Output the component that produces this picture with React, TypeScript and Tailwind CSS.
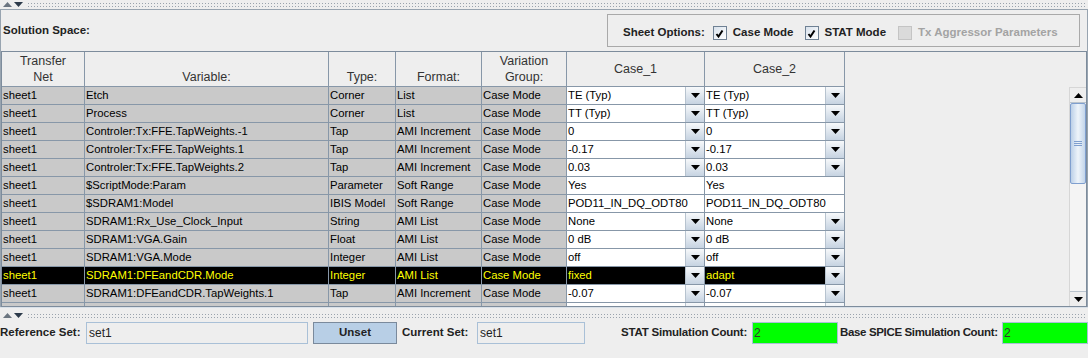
import React from "react";

type Row = {
  v: string;
  t: string;
  f: string;
  c1: string;
  c2: string;
  dd: boolean;
  sel?: boolean;
};

const rows: Row[] = [
  { v: "Etch", t: "Corner", f: "List", c1: "TE (Typ)", c2: "TE (Typ)", dd: true },
  { v: "Process", t: "Corner", f: "List", c1: "TT (Typ)", c2: "TT (Typ)", dd: true },
  { v: "Controler:Tx:FFE.TapWeights.-1", t: "Tap", f: "AMI Increment", c1: "0", c2: "0", dd: true },
  { v: "Controler:Tx:FFE.TapWeights.1", t: "Tap", f: "AMI Increment", c1: "-0.17", c2: "-0.17", dd: true },
  { v: "Controler:Tx:FFE.TapWeights.2", t: "Tap", f: "AMI Increment", c1: "0.03", c2: "0.03", dd: true },
  { v: "$ScriptMode:Param", t: "Parameter", f: "Soft Range", c1: "Yes", c2: "Yes", dd: false },
  { v: "$SDRAM1:Model", t: "IBIS Model", f: "Soft Range", c1: "POD11_IN_DQ_ODT80", c2: "POD11_IN_DQ_ODT80", dd: false },
  { v: "SDRAM1:Rx_Use_Clock_Input", t: "String", f: "AMI List", c1: "None", c2: "None", dd: true },
  { v: "SDRAM1:VGA.Gain", t: "Float", f: "AMI List", c1: "0 dB", c2: "0 dB", dd: true },
  { v: "SDRAM1:VGA.Mode", t: "Integer", f: "AMI List", c1: "off", c2: "off", dd: true },
  { v: "SDRAM1:DFEandCDR.Mode", t: "Integer", f: "AMI List", c1: "fixed", c2: "adapt", dd: true, sel: true },
  { v: "SDRAM1:DFEandCDR.TapWeights.1", t: "Tap", f: "AMI Increment", c1: "-0.07", c2: "-0.07", dd: true },
  { v: "", t: "", f: "", c1: "", c2: "", dd: true },
];

const DownArrow = () => (
  <svg width="9" height="5" viewBox="0 0 9 5">
    <path d="M0 0h9L4.5 5z" fill="#000" />
  </svg>
);

const UpArrow = () => (
  <svg width="9" height="5" viewBox="0 0 9 5">
    <path d="M0 5h9L4.5 0z" fill="#000" />
  </svg>
);

const DropBtn = () => (
  <div className="w-[19px] h-full shrink-0 flex items-center justify-center border-l border-[#b7c3cf] bg-gradient-to-b from-[#f7f9fb] to-[#c6d3e1]">
    <DownArrow />
  </div>
);

const Check = ({ checked, disabled }: { checked?: boolean; disabled?: boolean }) =>
  disabled ? (
    <div className="w-[14px] h-[14px] border border-[#c4c4c4] bg-[#dadada]" />
  ) : (
    <div className="w-[14px] h-[14px] border border-[#6f8194] bg-gradient-to-br from-[#d9e2ec] to-[#ffffff] flex items-center justify-center">
      {checked && (
        <svg width="9" height="9" viewBox="0 0 9 9">
          <path d="M1.5 5 L3.5 7.5 L7.5 1.5" stroke="#000" strokeWidth="2" fill="none" />
        </svg>
      )}
    </div>
  );

const Splitter = ({ className }: { className: string }) => (
  <div className={`flex items-center gap-[2px] px-[3px] ${className}`}>
    <svg width="9" height="5" viewBox="0 0 9 5">
      <path d="M0 5h9L4.5 0z" fill="#6b7580" />
    </svg>
    <svg width="9" height="5" viewBox="0 0 9 5">
      <path d="M0 0h9L4.5 5z" fill="#2c3a4a" />
    </svg>
    <div className="flex-1 h-[5px] ml-[2px] bg-[radial-gradient(circle,#9aa3ad_0.7px,transparent_0.9px)] bg-[length:3px_3px]" />
  </div>
);

function Cell({ w, text, sel }: { w: string; text: string; sel?: boolean }) {
  return (
    <div
      className={`${w} h-full shrink-0 border-r border-[#8797a8] pl-[1px] flex items-center whitespace-nowrap overflow-hidden ${
        sel ? "bg-black text-[#ffff00]" : "bg-[#c9c9c9] text-black"
      }`}
    >
      {text}
    </div>
  );
}

function CaseCell({ w, text, dd, sel }: { w: string; text: string; dd: boolean; sel?: boolean }) {
  return (
    <div
      className={`${w} h-full shrink-0 border-r border-[#8797a8] flex ${
        sel ? "bg-black text-[#ffff00]" : "bg-white text-black"
      }`}
    >
      <div className="flex-1 pl-[1px] flex items-center whitespace-nowrap overflow-hidden">{text}</div>
      {dd && <DropBtn />}
    </div>
  );
}

export default function App() {
  return (
    <div
      className="w-[1088px] h-[358px] bg-[#eeeeee] flex flex-col overflow-hidden text-[#1e1e1e]"
      style={{ fontFamily: '"Liberation Sans", Arial, sans-serif' }}
    >
      {/* top splitter */}
      <Splitter className="h-[9px]" />

      {/* solution space panel */}
      <div className="border-t border-x border-[#98a4b0] flex flex-col">
        <div className="h-[41px] flex items-center justify-between pl-[2px] pr-[7px]">
          <span className="text-[11.5px] font-bold text-[#222]">Solution Space:</span>
          <div className="h-[33px] w-[473px] border border-[#a9a9a9] flex items-center pt-[5px] pl-[15px] text-[11.5px] font-bold text-[#222] whitespace-nowrap">
            <span className="mr-[8px]">Sheet Options:</span>
            <div className="flex items-center gap-[6px]">
              <Check checked />
              <span>Case Mode</span>
            </div>
            <div className="flex items-center gap-[6px] ml-[11px]">
              <Check checked />
              <span>STAT Mode</span>
            </div>
            <div className="flex items-center gap-[6px] ml-[12px]">
              <Check disabled />
              <span className="text-[#a3a3a3]">Tx Aggressor Parameters</span>
            </div>
          </div>
        </div>

        {/* table frame */}
        <div className="h-[256px] border border-[#7d8c9c] flex">
          <div className="w-[843px] flex flex-col text-[11.3px]">
            {/* header */}
            <div className="h-[35px] flex border-b border-[#8797a8] text-[12.5px] leading-[16px] text-[#333]">
              <div className="w-[83px] border-r border-[#8797a8] flex flex-col items-center justify-end pb-[1px]">
                <span>Transfer</span>
                <span>Net</span>
              </div>
              <div className="w-[244px] border-r border-[#8797a8] flex flex-col items-center justify-end pb-[1px]">
                <span>Variable:</span>
              </div>
              <div className="w-[67px] border-r border-[#8797a8] flex flex-col items-center justify-end pb-[1px]">
                <span>Type:</span>
              </div>
              <div className="w-[86px] border-r border-[#8797a8] flex flex-col items-center justify-end pb-[1px]">
                <span>Format:</span>
              </div>
              <div className="w-[85px] border-r border-[#8797a8] flex flex-col items-center justify-end pb-[1px]">
                <span>Variation</span>
                <span>Group:</span>
              </div>
              <div className="w-[138px] border-r border-[#8797a8] flex items-center justify-center">
                <span>Case_1</span>
              </div>
              <div className="w-[140px] border-r border-[#8797a8] flex items-center justify-center">
                <span>Case_2</span>
              </div>
            </div>

            {/* body */}
            <div className="h-[219px] overflow-hidden">
              {rows.map((r, i) => (
                <div key={i} className="h-[18px] flex border-b border-[#8797a8]">
                  <Cell w="w-[83px]" text={r.v ? "sheet1" : ""} sel={r.sel} />
                  <Cell w="w-[244px]" text={r.v} sel={r.sel} />
                  <Cell w="w-[67px]" text={r.t} sel={r.sel} />
                  <Cell w="w-[86px]" text={r.f} sel={r.sel} />
                  <Cell w="w-[85px]" text={r.v ? "Case Mode" : ""} sel={r.sel} />
                  <CaseCell w="w-[138px]" text={r.c1} dd={r.dd} sel={r.sel} />
                  <CaseCell w="w-[140px]" text={r.c2} dd={r.dd} sel={r.sel} />
                </div>
              ))}
            </div>
          </div>

          <div className="flex-1" />

          {/* vertical scrollbar */}
          <div className="w-[17px] flex flex-col">
            <div className="h-[35px]" />
            <div className="flex-1 flex flex-col border-l border-t border-[#d6d6d6] bg-[#f4f4f4]">
              <div className="h-[15px] flex items-center justify-center bg-[#eeeeee] border-b border-[#b9c3cd]">
                <UpArrow />
              </div>
              <div className="h-[81px] border border-[#7f9fcf] rounded-[2px] bg-gradient-to-r from-[#bcd0e8] via-[#eef4fa] to-[#c3d5ea] flex flex-col items-center justify-center gap-[1px]">
                <div className="w-[8px] h-[1px] bg-[#7f9fcf]" />
                <div className="w-[8px] h-[1px] bg-[#7f9fcf]" />
                <div className="w-[8px] h-[1px] bg-[#7f9fcf]" />
              </div>
              <div className="flex-1" />
              <div className="h-[15px] flex items-center justify-center bg-[#eeeeee] border-t border-[#b9c3cd]">
                <DownArrow />
              </div>
            </div>
          </div>
        </div>
      </div>

      {/* bottom splitter */}
      <Splitter className="h-[12px] pt-[4px] border-t border-[#d8e0e8]" />

      {/* bottom bar */}
      <div className="flex items-center h-[22px] mt-[3px] text-[11.5px] whitespace-nowrap">
        <span className="font-bold text-[#222] w-[86px]">Reference Set:</span>
        <div className="w-[222px] h-full border border-[#a9c0d7] pl-[2px] flex items-center text-[12px]">set1</div>
        <div className="w-[84px] h-full ml-[5px] border border-[#7a8a9c] bg-[#b8cfe6] flex items-center justify-center font-bold text-[#222]">
          Unset
        </div>
        <span className="font-bold text-[#222] ml-[5px] w-[75px]">Current Set:</span>
        <div className="w-[108px] h-full border border-[#a9c0d7] pl-[2px] flex items-center text-[12px]">set1</div>
        <span className="font-bold text-[#222] ml-[36px] w-[131px] tracking-[-0.2px]">STAT Simulation Count:</span>
        <div className="w-[86px] h-full bg-[#00ff00] border border-[#a9c0d7] pl-[1px] flex items-center text-[12px] text-[#333]">2</div>
        <span className="font-bold text-[#222] ml-[2px] w-[162px] tracking-[-0.35px]">Base SPICE Simulation Count:</span>
        <div className="w-[86px] h-full bg-[#00ff00] border border-[#a9c0d7] pl-[1px] flex items-center text-[12px] text-[#333]">2</div>
      </div>
    </div>
  );
}
